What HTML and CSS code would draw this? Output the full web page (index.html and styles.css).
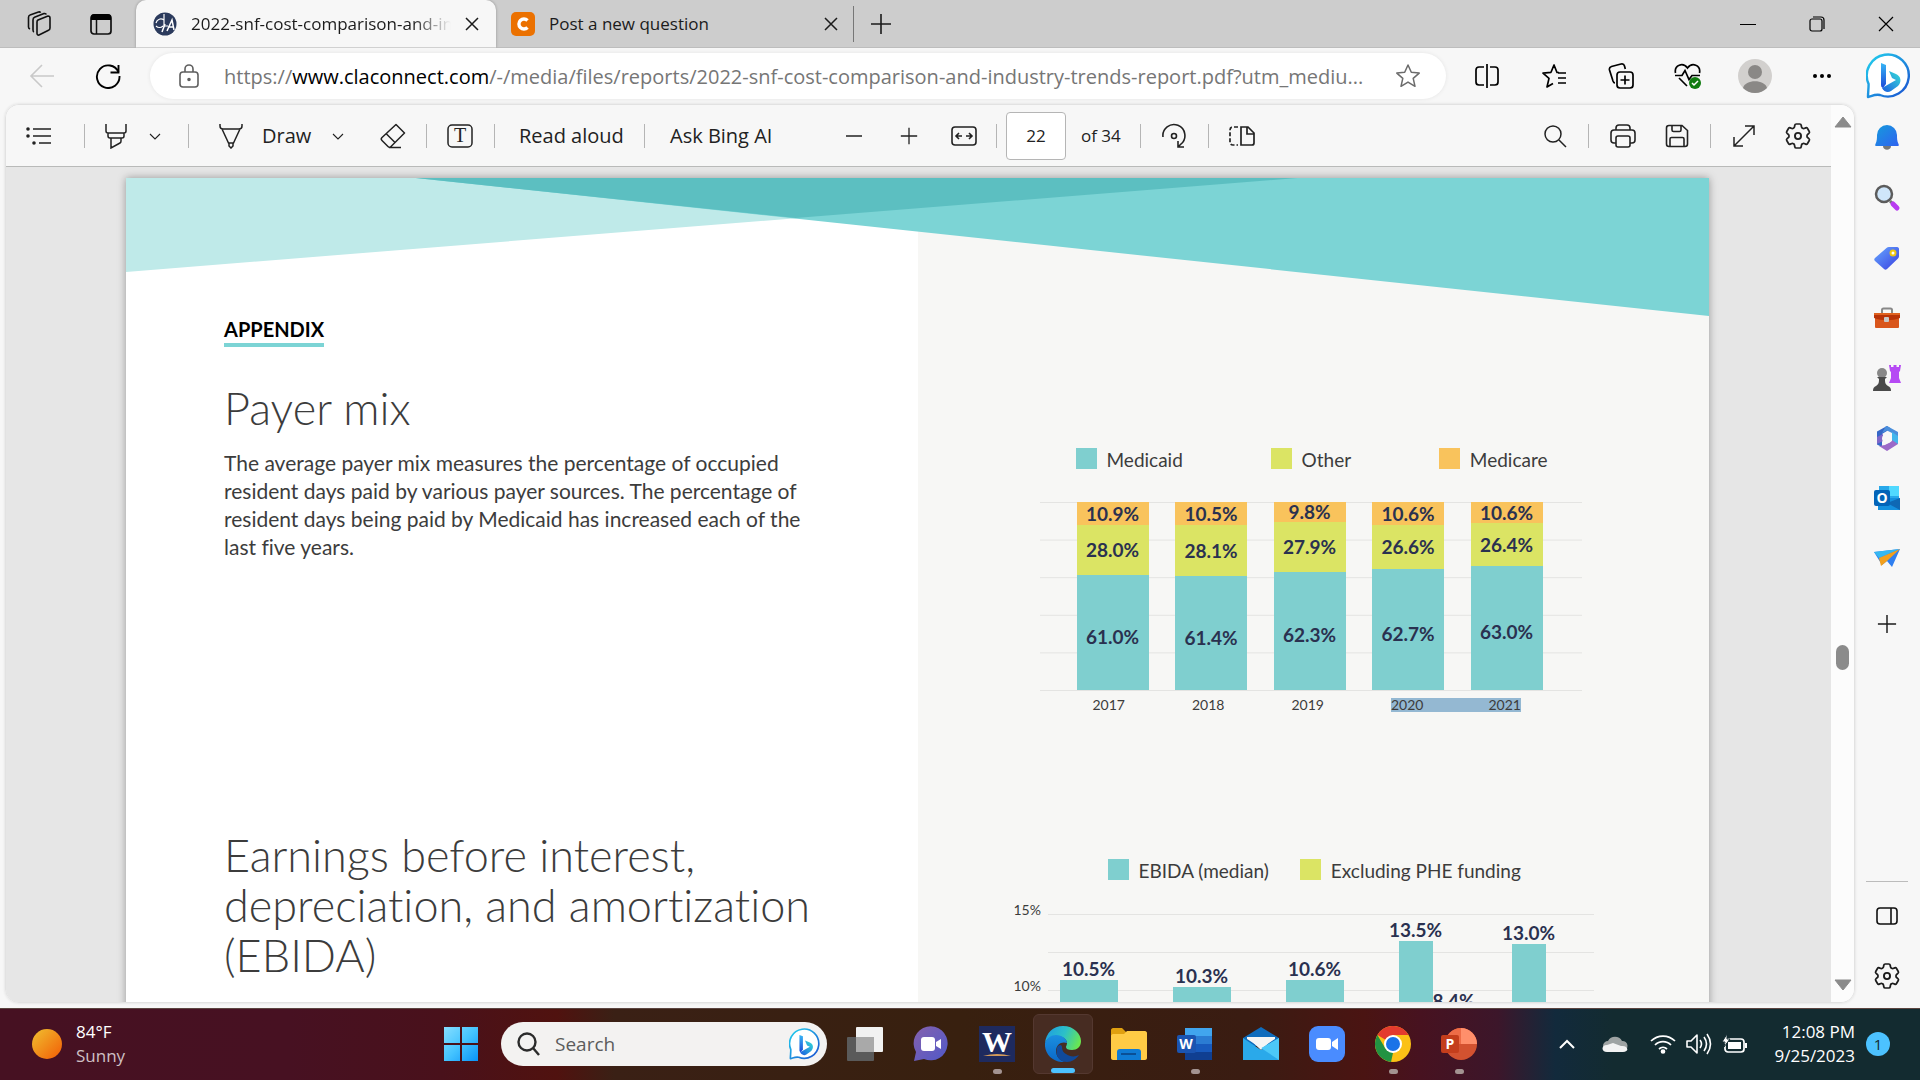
FILE: index.html
```html
<!DOCTYPE html>
<html lang="en">
<head>
    <meta charset="UTF-8">
    <meta name="viewport" content="width=device-width, initial-scale=1.0">
    <title>2022-snf-cost-comparison-and-industry-trends-report.pdf</title>
    <link rel="stylesheet" href="styles.css">
</head>
<body>
    <!-- shared icons -->
    <svg class="defs" aria-hidden="true">
        <defs>
            <linearGradient id="bing-ring" x1="0" y1="0" x2="1" y2="1">
                <stop offset="0" stop-color="#22d3ee"/>
                <stop offset="1" stop-color="#1a4fd0"/>
            </linearGradient>
            <linearGradient id="bing-b" x1="0" y1="0" x2="0" y2="1">
                <stop offset="0" stop-color="#37b6f5"/>
                <stop offset="1" stop-color="#1b48d8"/>
            </linearGradient>
            <linearGradient id="bing-tail" x1="0" y1="1" x2="1" y2="0">
                <stop offset="0" stop-color="#1b5be0"/>
                <stop offset="1" stop-color="#35e0d8"/>
            </linearGradient>
        </defs>
        <symbol id="gear" viewBox="0 0 24 24">
            <path fill="none" stroke="currentColor" stroke-width="1.3" d="M9.594 3.94c.09-.542.56-.94 1.11-.94h2.593c.55 0 1.02.398 1.11.94l.213 1.281c.063.374.313.686.645.87.074.04.147.083.22.127.325.196.72.257 1.075.124l1.217-.456a1.125 1.125 0 0 1 1.37.49l1.296 2.247a1.125 1.125 0 0 1-.26 1.431l-1.003.827c-.293.241-.438.613-.43.992a7.723 7.723 0 0 1 0 .255c-.008.378.137.75.43.991l1.004.827c.424.35.534.955.26 1.43l-1.298 2.247a1.125 1.125 0 0 1-1.369.491l-1.217-.456c-.355-.133-.75-.072-1.076.124a6.47 6.47 0 0 1-.22.128c-.331.183-.581.495-.644.869l-.213 1.281c-.09.543-.56.94-1.11.94h-2.594c-.55 0-1.019-.398-1.11-.94l-.213-1.281c-.062-.374-.312-.686-.644-.87a6.52 6.52 0 0 1-.22-.127c-.325-.196-.72-.257-1.076-.124l-1.217.456a1.125 1.125 0 0 1-1.369-.49l-1.297-2.247a1.125 1.125 0 0 1 .26-1.431l1.004-.827c.292-.24.437-.613.43-.991a6.932 6.932 0 0 1 0-.255c.007-.38-.138-.751-.43-.992l-1.004-.827a1.125 1.125 0 0 1-.26-1.43l1.297-2.247a1.125 1.125 0 0 1 1.37-.491l1.216.456c.356.133.751.072 1.076-.124.072-.044.146-.086.22-.128.332-.183.582-.495.644-.869l.214-1.28Z"/>
            <circle cx="12" cy="12" r="2.3" fill="none" stroke="currentColor" stroke-width="1.4"/>
        </symbol>
        <symbol id="bing" viewBox="0 0 46 46">
            <path d="M2 44c0-5 .6-8 .6-13A21 21 0 1 1 14 42c-5-1-8 1-12 2z" fill="#fff" stroke="url(#bing-ring)" stroke-width="2.4" stroke-linejoin="round"/>
            <path d="M15 10l5 2v19l-3 4c-2-1-2-2-2-4z" fill="url(#bing-b)"/>
            <path d="M23 18l7 3c5 2 6 8 2 12l-7 5c-3 2-7 1-9-3l14-8-4-2z" fill="url(#bing-tail)"/>
        </symbol>
        <symbol id="chevron" viewBox="0 0 12 12">
            <path d="M1 4l5 5 5-5" fill="none" stroke="currentColor" stroke-width="1.1"/>
        </symbol>
        <symbol id="close" viewBox="0 0 14 14">
            <path d="M1 1l12 12M13 1L1 13" fill="none" stroke="currentColor" stroke-width="1.5"/>
        </symbol>
        <symbol id="plus" viewBox="0 0 22 22">
            <path d="M11 1v20M1 11h20" fill="none" stroke="currentColor" stroke-width="1.6"/>
        </symbol>
    </svg>

    <header class="tab-bar">
        <button class="tab-tool" aria-label="Workspaces">
            <svg width="26" height="26" viewBox="0 0 26 26" fill="none" stroke="#111" stroke-width="1.6" stroke-linejoin="round"><path d="M12 9l10-4c1 0 2 .5 2 2v10c0 1-.5 2-1.500 2.300L13 24c-1 .3-2-.4-2-1.500V11c0-1 .3-1.600 1-2z"/><path d="M8 21c-1-.3-1-1-1-2V9c0-1.500.5-2.300 1.500-2.700L18 2.600c1-.2 2 0 2.300 1"/><path d="M4 18c-1-.4-1.500-1-1.500-2V6.500C2.500 5 3 4.300 4 4l8.500-3c1-.2 1.700 0 2 .7"/></svg>
        </button>
        <button class="tab-tool" aria-label="Tab actions">
            <svg width="24" height="24" viewBox="0 0 24 24"><rect x="2" y="3" width="20" height="19" rx="3" fill="none" stroke="#111" stroke-width="1.700"/><path d="M2 8V5c0-2 1-3 3-3h14c2 0 3 1 3 3v3z" fill="#000"/><path d="M7.500 8v14" stroke="#111" stroke-width="1.500"/></svg>
        </button>
        <div class="tab active">
            <svg width="24" height="24" viewBox="0 0 24 24"><circle cx="12" cy="12" r="11.500" fill="#2b3a5c"/><path d="M11 2v12h4M3 11c1-4 5-5 8-3M3 14c2 2 5 2 7 0" fill="none" stroke="#fff" stroke-width="1.200"/><path d="M9 20l3-8M14 19l5-11 2 10M15 15h6" fill="none" stroke="#fff" stroke-width="1.500"/></svg>
            <button class="tab-title fade">2022-snf-cost-comparison-and-industry</button>
            <button class="tab-close" aria-label="Close tab"><svg width="14" height="14"><use href="#close"/></svg></button>
        </div>
        <div class="tab">
            <svg width="24" height="24" viewBox="0 0 24 24"><rect width="24" height="24" rx="5" fill="#eb7100"/><path d="M16.500 8.500a5 5 0 1 0 0 7" fill="none" stroke="#fff" stroke-width="3.400"/></svg>
            <button class="tab-title">Post a new question</button>
            <button class="tab-close" aria-label="Close tab"><svg width="14" height="14"><use href="#close"/></svg></button>
        </div>
        <button class="new-tab" aria-label="New tab"><svg width="22" height="22"><use href="#plus"/></svg></button>
        <div class="window-controls">
            <button aria-label="Minimize"><svg width="16" height="16"><path d="M0 8.500h16" stroke="#000"/></svg></button>
            <button aria-label="Restore"><svg width="16" height="16" viewBox="0 0 16 16" fill="none" stroke="#000" stroke-width="1.200"><rect x="1" y="3" width="12" height="12" rx="2"/><path d="M4 1h8c2 0 3 1 3 3v9"/></svg></button>
            <button aria-label="Close"><svg width="16" height="16" viewBox="0 0 16 16"><path d="M1 1l14 14M15 1L1 15" stroke="#000" stroke-width="1.200"/></svg></button>
        </div>
    </header>

    <nav class="address-row">
        <button class="nav-btn" aria-label="Back"><svg width="26" height="26" viewBox="0 0 26 26" fill="none" stroke="#c9c9c9" stroke-width="1.600"><path d="M25 13H2M13 2L2 13l11 11"/></svg></button>
        <button class="nav-btn" aria-label="Refresh"><svg width="26" height="26" viewBox="0 0 26 26" fill="none" stroke="#000" stroke-width="1.900"><path d="M23.500 9A11.300 11.300 0 1 0 24.500 13"/><path d="M23.500 2v7.500h-8"/></svg></button>
        <div class="address">
            <svg width="22" height="26" viewBox="0 0 22 26" fill="none" stroke="#5f5f5f" stroke-width="1.600"><rect x="2" y="9" width="18" height="15" rx="3"/><path d="M7 9V6a4 4 0 0 1 8 0v3"/><circle cx="11" cy="16.500" r="1" fill="#5f5f5f"/></svg>
            <div class="url" role="textbox" contenteditable="true" spellcheck="false" aria-label="Address bar">https://<b>www.claconnect.com</b>/-/media/files/reports/2022-snf-cost-comparison-and-industry-trends-report.pdf?utm_mediu...</div>
            <button class="icon-btn" aria-label="Add to favorites"><svg width="26" height="26" viewBox="0 0 26 26" fill="none" stroke="#6b6b6b" stroke-width="1.500" stroke-linejoin="round"><path d="M13 2l3.300 7.300 7.900.8-6 5.300 1.800 7.900-7-4.200-7 4.200 1.800-7.900-6-5.300 7.900-.8z"/></svg></button>
        </div>
        <div class="browser-actions">
            <button aria-label="Split screen"><svg width="26" height="26" viewBox="0 0 26 26" fill="none" stroke="#000" stroke-width="1.700"><path d="M10 4H5C3 4 2 5 2 7v12c0 2 1 3 3 3h5M16 4h5c2 0 3 1 3 3v12c0 2-1 3-3 3h-5M13 1v24"/></svg></button>
            <button aria-label="Favorites"><svg width="26" height="26" viewBox="0 0 26 26" fill="none" stroke="#000" stroke-width="1.700" stroke-linejoin="round"><path d="M18 9.500h-2L13 2 10 9.300l-8 .8 6 5.300-2 8.600 6-3.500M17 10h8M17 15h8M17 20h8"/></svg></button>
            <button aria-label="Collections"><svg width="26" height="26" viewBox="0 0 26 26" fill="none" stroke="#000" stroke-width="1.700"><rect x="9" y="9" width="16" height="16" rx="3"/><path d="M17 12.500v9M12.500 17h9M5 18L1.500 7C1 5 2 4 3.500 3.500L13 1c2-.4 3 0 3.500 2l.8 3M5 18c.5 1.500 1.500 2 2 2"/></svg></button>
            <button aria-label="Browser essentials"><svg width="28" height="28" viewBox="0 0 28 28" fill="none" stroke="#000" stroke-width="1.700"><path d="M1.500 11C0 3 9 0 13.500 6 18 0 27 3 25.500 11M5 16l8 8M1 13.500h7l3-5 4 9 3-4h8"/><circle cx="21" cy="21" r="6" fill="#107c10" stroke="none"/><path d="M18 21l2 2 4-4" stroke="#fff" stroke-width="1.500"/></svg></button>
            <button aria-label="Profile"><svg width="34" height="34" viewBox="0 0 34 34"><circle cx="17" cy="17" r="17" fill="#d2d0ce"/><circle cx="17" cy="13" r="7" fill="#8a8886"/><path d="M5 29c2-9 22-9 24 0a17 17 0 0 1-24 0z" fill="#8a8886"/></svg></button>
            <button aria-label="Settings and more"><svg width="20" height="6"><circle cx="3" cy="3" r="2"/><circle cx="10" cy="3" r="2"/><circle cx="17" cy="3" r="2"/></svg></button>
            <button aria-label="Bing chat"><svg width="46" height="46"><use href="#bing"/></svg></button>
        </div>
    </nav>

    <div class="workspace">
        <section class="frame">
            <div class="viewer">
                <div class="pdf-toolbar">
                    <div class="group contents">
                        <button class="icon-btn" aria-label="Contents"><svg width="26" height="20" viewBox="0 0 26 20" stroke="#222" stroke-width="1.600"><path d="M7 3h18M7 10h18M13 17h12"/><circle cx="2" cy="3" r="1"/><circle cx="2" cy="10" r="1"/><circle cx="8" cy="17" r="1"/></svg></button>
                    </div>
                    <div class="group highlight">
                        <button class="icon-btn" aria-label="Highlight"><svg width="24" height="26" viewBox="0 0 24 26" fill="none" stroke="#222" stroke-width="1.500"><path d="M2 1v7c0 1 .5 2 2 2h16c1.500 0 2-1 2-2V1M4 10v3c0 1 .5 2 2 2h12c1.500 0 2-1 2-2v-3M7 15v10l9-5c1-.5 1-1 1-2v-3"/></svg></button>
                        <button class="small-btn" aria-label="Highlight colors"><svg width="12" height="12"><use href="#chevron"/></svg></button>
                    </div>
                    <div class="group draw">
                        <button class="icon-btn" aria-label="Pen"><svg width="24" height="26" viewBox="0 0 24 26" fill="none" stroke="#222" stroke-width="1.500"><path d="M1 1v2c0 2 1 3 3 3h16c2 0 3-1 3-3V1M3 6l6.500 14h5L21 6M10 20v3l2 2 2-2v-3"/></svg></button>
                        <button class="text-btn">Draw</button>
                        <button class="small-btn" aria-label="Pen options"><svg width="12" height="12"><use href="#chevron"/></svg></button>
                        <button class="icon-btn push" aria-label="Erase"><svg width="26" height="26" viewBox="0 0 26 26" fill="none" stroke="#222" stroke-width="1.500" stroke-linejoin="round"><path d="M16 1.500L24.500 10 11 23.500c-1 1-2 1-3 0L2 17.500c-1-1-1-2 0-3zM6 10.500l9 9M9 24.500h12"/></svg></button>
                    </div>
                    <div class="group text">
                        <button class="icon-btn" aria-label="Add text"><svg width="26" height="24" viewBox="0 0 26 24"><rect x="1" y="1" width="24" height="22" rx="4" fill="none" stroke="#222" stroke-width="1.500"/><text x="13" y="18" text-anchor="middle" class="serif-t">T</text></svg></button>
                    </div>
                    <div class="group read"><button class="text-btn">Read aloud</button></div>
                    <div class="group ask">
                        <button class="text-btn">Ask Bing AI</button>
                        <button class="icon-btn push" aria-label="Zoom out"><svg width="16" height="16"><path d="M0 8h16" stroke="#222" stroke-width="1.500"/></svg></button>
                        <button class="icon-btn" aria-label="Zoom in"><svg width="18" height="18"><use href="#plus"/></svg></button>
                        <button class="icon-btn" aria-label="Fit to width"><svg width="26" height="20" viewBox="0 0 26 20" fill="none" stroke="#222" stroke-width="1.600"><rect x="1" y="1" width="24" height="18" rx="3"/><path d="M11 10H5M15 10h6M8 7l-3 3 3 3M18 7l3 3-3 3"/></svg></button>
                    </div>
                    <div class="group pages">
                        <input class="page-number" type="text" value="22" aria-label="Page number">
                        <span>of 34</span>
                    </div>
                    <div class="group rotate">
                        <button class="icon-btn" aria-label="Rotate"><svg width="26" height="26" viewBox="0 0 26 26" fill="none" stroke="#222" stroke-width="1.600"><path d="M2 14A11 11 0 1 1 20 21l-3 3M17 18v6h6"/><circle cx="13" cy="13" r="2.500"/></svg></button>
                    </div>
                    <div class="group layout">
                        <button class="icon-btn" aria-label="Page view"><svg width="26" height="20" viewBox="0 0 26 20" fill="none" stroke="#222" stroke-width="1.700"><path d="M12 1h7l6 6v10c0 1.500-.5 2-2 2H12zM18 1v7h7"/><path d="M9 1H4C2 1 1 2 1 4v12c0 2 1 3 3 3h5" stroke-dasharray="4 2"/></svg></button>
                    </div>
                    <div class="group find">
                        <button class="icon-btn" aria-label="Find"><svg width="24" height="24" viewBox="0 0 24 24" fill="none" stroke="#222" stroke-width="1.500"><circle cx="10" cy="10" r="8"/><path d="M16 16l7 7"/></svg></button>
                    </div>
                    <div class="group print">
                        <button class="icon-btn" aria-label="Print"><svg width="26" height="24" viewBox="0 0 26 24" fill="none" stroke="#222" stroke-width="1.600"><path d="M6 19H4c-2 0-3-1-3-3V9c0-2 1-3 3-3h18c2 0 3 1 3 3v7c0 2-1 3-3 3h-2M6 6V4c0-2 1-3 3-3h8c2 0 3 1 3 3v2"/><rect x="6" y="12" width="14" height="11" rx="2"/></svg></button>
                        <button class="icon-btn" aria-label="Save"><svg width="24" height="24" viewBox="0 0 24 24" fill="none" stroke="#222" stroke-width="1.600"><path d="M4 1.500h13l5.500 5V20c0 1.500-1 2.500-2.500 2.500H4c-1.500 0-2.500-1-2.500-2.500V4c0-1.500 1-2.500 2.500-2.500zM7 2v4c0 1 .5 1.500 1.500 1.500h6c1 0 1.500-.5 1.500-1.500V2M5 22v-7c0-1 .5-1.500 1.500-1.500h11c1 0 1.500.5 1.500 1.500v7"/></svg></button>
                    </div>
                    <div class="group expand">
                        <button class="icon-btn" aria-label="Full screen"><svg width="24" height="24" viewBox="0 0 24 24" fill="none" stroke="#222" stroke-width="1.500"><path d="M2 22L22 2M13 2h9v9M2 13v9h9"/></svg></button>
                        <button class="icon-btn" aria-label="PDF settings"><svg width="32" height="32"><use href="#gear"/></svg></button>
                    </div>
                </div>

                <main class="document">
                    <article class="page">
                        <svg class="page-banner" viewBox="0 0 1584 138" preserveAspectRatio="none">
                            <path d="M0 0h1172L0 94z" fill="#bfeae9"/>
                            <path d="M290 0h1294v138z" fill="#7cd4d5"/>
                            <path d="M290 0h882L670 40z" fill="#5cbfc1"/>
                        </svg>
                        <div class="column copy">
                            <p class="eyebrow">APPENDIX</p>
                            <h2>Payer mix</h2>
                            <p class="body-text">The average payer mix measures the percentage of occupied<br>resident days paid by various payer sources. The percentage of<br>resident days being paid by Medicaid has increased each of the<br>last five years.</p>
                            <h2 class="second">Earnings before interest,<br>depreciation, and amortization<br>(EBIDA)</h2>
                        </div>
                        <div class="column charts">
                            <div class="legend payer-legend">
                                <span><i class="teal"></i>Medicaid</span>
                                <span><i class="lime"></i>Other</span>
                                <span><i class="gold"></i>Medicare</span>
                            </div>
                            <div class="payer-plot">
                                <div class="stack">
                                    <div class="gold" style="height:12%">10.9%</div>
                                    <div class="lime" style="height:27%">28.0%</div>
                                    <div class="teal" style="height:61%">61.0%</div>
                                </div>
                                <div class="stack">
                                    <div class="gold" style="height:12%">10.5%</div>
                                    <div class="lime" style="height:27.4%">28.1%</div>
                                    <div class="teal" style="height:60.6%">61.4%</div>
                                </div>
                                <div class="stack">
                                    <div class="gold" style="height:10.6%">9.8%</div>
                                    <div class="lime" style="height:26.4%">27.9%</div>
                                    <div class="teal" style="height:63%">62.3%</div>
                                </div>
                                <div class="stack">
                                    <div class="gold" style="height:12%">10.6%</div>
                                    <div class="lime" style="height:23.6%">26.6%</div>
                                    <div class="teal" style="height:64.4%">62.7%</div>
                                </div>
                                <div class="stack">
                                    <div class="gold" style="height:11.4%">10.6%</div>
                                    <div class="lime" style="height:22.6%">26.4%</div>
                                    <div class="teal" style="height:66%">63.0%</div>
                                </div>
                            </div>
                            <div class="years">
                                <span>2017</span>
                                <span>2018</span>
                                <span>2019</span>
                                <mark><span>2020</span><span>2021</span></mark>
                            </div>

                            <div class="legend ebida-legend">
                                <span><i class="teal"></i>EBIDA (median)</span>
                                <span><i class="lime"></i>Excluding PHE funding</span>
                            </div>
                            <div class="ebida">
                                <div class="axis"><span>15%</span><span>10%</span><span>5%</span></div>
                                <div class="ebida-plot">
                                    <div class="bars"><div class="bar wide" style="height:71%"><b>10.5%</b></div></div>
                                    <div class="bars"><div class="bar wide" style="height:68%"><b>10.3%</b></div></div>
                                    <div class="bars"><div class="bar wide" style="height:71%"><b>10.6%</b></div></div>
                                    <div class="bars">
                                        <div class="bar" style="height:88%"><b>13.5%</b></div>
                                        <div class="bar alt" style="height:57%"><b>8.4%</b></div>
                                    </div>
                                    <div class="bars"><div class="bar" style="height:87%"><b>13.0%</b></div></div>
                                </div>
                            </div>
                        </div>
                    </article>
                </main>
            </div>
            <div class="scrollbar">
                <svg width="18" height="12"><path d="M9 1l8 10H1z" fill="#8b8b8b" stroke="#8b8b8b" stroke-linejoin="round"/></svg>
                <span class="thumb"></span>
                <svg width="18" height="12"><path d="M9 11L1 1h16z" fill="#8b8b8b" stroke="#8b8b8b" stroke-linejoin="round"/></svg>
            </div>
        </section>

        <aside class="sidebar">
            <button aria-label="Notifications"><svg width="26" height="28" viewBox="0 0 26 28"><defs><linearGradient id="bell" x2="1" y2="1"><stop stop-color="#159bdc"/><stop offset="1" stop-color="#2f62f0"/></linearGradient></defs><path d="M9 22h8c0 5-8 5-8 0z" fill="#777"/><path d="M2 22c-1 0-1-1-.5-2C3 17 3 14 3 11a10 10 0 0 1 20 0c0 3 0 6 1.500 9 .5 1 .5 2-.5 2z" fill="url(#bell)"/></svg></button>
            <button aria-label="Search"><svg width="28" height="28" viewBox="0 0 28 28"><path d="M17 17l3 3" stroke="#777" stroke-width="3"/><path d="M20 20l4 4" stroke="#b83cf0" stroke-width="5" stroke-linecap="round"/><circle cx="11" cy="10" r="8" fill="#cfe6fa" stroke="#5c5c5c" stroke-width="2.500"/></svg></button>
            <button aria-label="Shopping"><svg width="28" height="28" viewBox="0 0 28 28"><defs><linearGradient id="tag" x2="1" y2="1"><stop stop-color="#66a8ff"/><stop offset="1" stop-color="#3a3fe0"/></linearGradient></defs><path d="M16 3h8c1.500 0 2 1 2 2v7c0 1-.5 2-1 2.500L14 25c-1 1-2 1-3 0l-9-8c-1-1-1-2 0-3L13.500 4c.7-.6 1.500-1 2.500-1z" fill="url(#tag)"/><circle cx="20" cy="9" r="2.500" fill="#fff" stroke="#f2c811" stroke-width="2"/></svg></button>
            <button aria-label="Tools"><svg width="28" height="28" viewBox="0 0 28 28"><path d="M9 9V6c0-1 .6-1.500 1.500-1.500h7c1 0 1.500.5 1.500 1.500v3" fill="none" stroke="#888" stroke-width="2"/><rect x="2" y="13" width="24" height="11" rx="1" fill="#d9561c"/><path d="M1 9h26v5c-8 3-18 3-26 0z" fill="#b93408"/><path d="M1 9h26v2H1z" fill="#e0621f"/><rect x="11" y="13" width="5" height="5" rx="1" fill="#c8c8c8"/></svg></button>
            <button aria-label="Games"><svg width="28" height="28" viewBox="0 0 28 28"><path d="M16 1h2v2h2.500V1h3v2H26V1h2l-1 6-1 1v6l2 5H16l2-5V8l-1-1z" fill="#b64af4"/><circle cx="9" cy="9" r="5" fill="#888"/><path d="M4 13h10l-2 2c0 3 0 5 3 7 2 1 3 2 3 5H0c0-3 1-4 3-5 3-2 3-4 3-7z" fill="#4a4a4a"/></svg></button>
            <button aria-label="Microsoft 365"><svg width="28" height="28" viewBox="0 0 28 28"><path d="M14 2L4 7.500v13L9 23V10l9-5.500z" fill="#3567c7"/><path d="M14 2l11 6v9l-6-4V9l-5-2.500L9 9l4-7z" fill="#4a8fdc"/><path d="M25 12v8l-11 7-8-5 6-1 7-4V9z" fill="#9b69c8"/><path d="M19 8l6 4v8l-6-4z" fill="#42b6ec"/><path d="M4 20l6-3v-7L4 13z" fill="#7e67c8"/><circle cx="14" cy="14.500" r="5" fill="#f7f7f7"/></svg></button>
            <button aria-label="Outlook"><svg width="28" height="28" viewBox="0 0 28 28"><path d="M6 2h20v12H6z" fill="#28a8ea"/><path d="M16 2h10v10H16z" fill="#50d9ff"/><path d="M5 14h22v12H5z" fill="#1490df"/><path d="M27 14v12L14 19z" fill="#0f68b4"/><rect x="1" y="6" width="16" height="16" rx="2" fill="#0364b8"/><text x="9" y="19" text-anchor="middle" class="app-letter">O</text></svg></button>
            <button aria-label="Drop"><svg width="28" height="28" viewBox="0 0 28 28"><path d="M1 8l26-3-8 18-5-6-5 4z" fill="#2f7ff0"/><path d="M1 8l26-3L6 14z" fill="#35b8f0"/><path d="M6 14l21-9-13 12-6 5z" fill="#f3a01c"/></svg></button>
            <button class="add" aria-label="Customize"><svg width="20" height="20"><use href="#plus"/></svg></button>
            <div class="sidebar-foot">
                <button aria-label="Hide sidebar"><svg width="22" height="18" viewBox="0 0 22 18" fill="none" stroke="#111" stroke-width="1.600"><rect x="1" y="1" width="20" height="16" rx="3"/><path d="M15 1v16"/></svg></button>
                <button aria-label="Settings"><svg width="32" height="32"><use href="#gear"/></svg></button>
            </div>
        </aside>
    </div>

    <footer class="taskbar">
        <button class="weather">
            <svg width="30" height="30"><defs><linearGradient id="sun" x2="1" y2="1"><stop stop-color="#f0c030"/><stop offset="1" stop-color="#f25c05"/></linearGradient></defs><circle cx="15" cy="15" r="15" fill="url(#sun)"/></svg>
            <span>84°F<small>Sunny</small></span>
        </button>
        <div class="apps">
            <button class="app" aria-label="Start"><svg width="36" height="36" viewBox="0 0 36 36"><defs><linearGradient id="win" gradientUnits="userSpaceOnUse" x1="0" y1="0" x2="36" y2="36"><stop stop-color="#8ae0ff"/><stop offset=".5" stop-color="#45c4ff"/><stop offset="1" stop-color="#0590f8"/></linearGradient></defs><path d="M1 1h16v16H1zM19 1h16v16H19zM1 19h16v16H1zM19 19h16v16H19z" fill="url(#win)"/></svg></button>
            <label class="search">
                <svg width="24" height="24" viewBox="0 0 24 24" fill="none" stroke="#2b2b2b" stroke-width="2.400"><circle cx="11" cy="10" r="8.500"/><path d="M17 16l6 7"/></svg>
                <input type="text" placeholder="Search" aria-label="Search">
                <svg width="32" height="32"><use href="#bing"/></svg>
            </label>
            <button class="app" aria-label="Task view"><svg width="36" height="36" viewBox="0 0 36 36"><rect x="9" y="1" width="27" height="25" rx="1" fill="#f1f1f1"/><rect x="0" y="11" width="27" height="24" rx="1" fill="#5a5a5a"/><path d="M9 11h18v15H9z" fill="#a9a9a9"/></svg></button>
            <button class="app" aria-label="Chat"><svg width="36" height="36" viewBox="0 0 36 36"><defs><linearGradient id="chat" x2="1" y2="1"><stop stop-color="#8561ad"/><stop offset="1" stop-color="#5059c9"/></linearGradient></defs><path d="M1 35l2-9A17 17 0 1 1 11 33z" fill="url(#chat)"/><rect x="8" y="11" width="14" height="14" rx="3" fill="#fff"/><path d="M23 16l5-3v10l-5-3z" fill="#fff"/></svg></button>
            <button class="app running" aria-label="W"><svg width="36" height="36" viewBox="0 0 36 36"><path fill="#1e2a5e" d="M0 0h36v36H0z"/><text x="18" y="26" text-anchor="middle" class="serif-w">W</text><path d="M4 30q14-4 28 0z" fill="#d29a5a"/></svg></button>
            <button class="app current" aria-label="Edge"><svg width="36" height="36" viewBox="0 0 36 36"><defs><linearGradient id="edge-top" x1="0" y1=".3" x2="1" y2=".6"><stop stop-color="#1f9fe0"/><stop offset=".5" stop-color="#2cc0c8"/><stop offset="1" stop-color="#6be84e"/></linearGradient><linearGradient id="edge-left" x1="0" y1="0" x2="0" y2="1"><stop stop-color="#1b8fe0"/><stop offset="1" stop-color="#0a68c8"/></linearGradient></defs><path d="M0 17C1 7 8 0 18 0c11 0 18 8 18 15 0 6-4 9-9 9-4 0-6-1-6-3 0-1 1-2 1-4 0-4-5-7-10-7-6 0-10 3-12 7z" fill="url(#edge-top)"/><path d="M0 17c2-5 6-8 11-8 6 0 11 4 11 8-5-2-11 1-11 8 0 5 4 10 9 11C8 37-1 28 0 17z" fill="url(#edge-left)"/><path d="M13 20c-3 4-2 16 9 16 5 0 9-3 12-7-4 2-9 2-13-1-2-1-4-3-4-7 0-2-2-3-4-1z" fill="#10499a"/></svg></button>
            <button class="app" aria-label="File Explorer"><svg width="36" height="36" viewBox="0 0 36 36"><path d="M0 4c0-1 1-2 2-2h9l4 4h8v8H0z" fill="#e0a010"/><path d="M0 10c0-1 1-2 2-2h11l3-3h18c1 0 2 1 2 2v25c0 1-1 2-2 2H2c-1 0-2-1-2-2z" fill="#ffcb45"/><path d="M6 34v-8c0-2 1-3 3-3h18c2 0 3 1 3 3v8z" fill="#0f7bd4"/><path d="M10 28h15" stroke="#0a4f95" stroke-width="2"/></svg></button>
            <button class="app running" aria-label="Word"><svg width="36" height="36" viewBox="0 0 36 36"><path d="M8 2h27v8H8z" fill="#41a5ee"/><path d="M8 10h27v8H8z" fill="#2b7cd3"/><path d="M8 18h27v8H8z" fill="#185abd"/><path d="M8 26h27v8H8z" fill="#103f91"/><rect x="0" y="9" width="19" height="18" rx="2" fill="#1b54b0"/><text x="9" y="23" text-anchor="middle" class="app-letter">W</text></svg></button>
            <button class="app" aria-label="Mail"><svg width="36" height="36" viewBox="0 0 36 36"><path d="M0 12L18 1l18 11v8H0z" fill="#0f6cbd"/><path d="M4 11h28L18 24z" fill="#f5f5f5"/><path d="M0 12l18 12 18-12v22H0z" fill="#2aa9ea"/><path d="M36 12v22L18 22z" fill="#4cc8f8"/><path d="M4 11h28v2L18 22 4 13z" fill="#f5f5f5"/></svg></button>
            <button class="app" aria-label="Zoom"><svg width="36" height="36" viewBox="0 0 36 36"><rect width="36" height="36" rx="9" fill="#4a8cff"/><rect x="7" y="12" width="15" height="12" rx="3" fill="#fff"/><path d="M23 16l6-4v12l-6-4z" fill="#fff"/></svg></button>
            <button class="app running" aria-label="Chrome"><svg width="36" height="36" viewBox="0 0 36 36"><circle cx="18" cy="18" r="18" fill="#fbc116"/><path d="M2.400 9A18 18 0 0 1 33.600 9H18l-8 4.500z" fill="#e33b2e"/><path d="M2.400 9l8 13.500L18 27l-2 8.900A18 18 0 0 1 2.400 9z" fill="#229342"/><circle cx="18" cy="18" r="9" fill="#fff"/><circle cx="18" cy="18" r="7" fill="#1a73e8"/></svg></button>
            <button class="app running" aria-label="PowerPoint"><svg width="36" height="36" viewBox="0 0 36 36"><circle cx="20" cy="18" r="16" fill="#d35230"/><path d="M20 2a16 16 0 0 1 16 16H20z" fill="#ff8f6b"/><path d="M20 2v16H4A16 16 0 0 1 20 2z" fill="#ed6c47"/><rect x="0" y="9" width="18" height="18" rx="2" fill="#c43e1c"/><text x="9" y="23" text-anchor="middle" class="app-letter">P</text></svg></button>
        </div>
        <div class="tray">
            <button aria-label="Show hidden icons"><svg width="16" height="10" fill="none" stroke="#fff" stroke-width="2"><path d="M1 9l7-7 7 7"/></svg></button>
            <button class="cloud" aria-label="OneDrive"><svg width="26" height="18" viewBox="0 0 26 18"><path d="M6 16a5 5 0 0 1 0-10 8 8 0 0 1 14 0 5 5 0 0 1 1 10z" fill="#9ea3a3"/><path d="M5 17c-6 0-6-7 0-7l6-2 8 3c7-1 9 6 2 6z" fill="#f2f2f2"/></svg></button>
            <button aria-label="Network"><svg width="26" height="20" viewBox="0 0 26 20" fill="none" stroke="#fff" stroke-width="1.700"><path d="M1 7a17 17 0 0 1 24 0M5 11a11 11 0 0 1 16 0M9 15a6 6 0 0 1 8 0"/><circle cx="13" cy="17.500" r="1.500" fill="#fff"/></svg></button>
            <button aria-label="Volume"><svg width="26" height="22" viewBox="0 0 26 22" fill="none" stroke="#fff" stroke-width="1.600" stroke-linejoin="round"><path d="M1 8h4l6-6v18l-6-6H1zM14 7q3 4 0 8M18 4q5 7 0 14M21 1q7 10 0 20"/></svg></button>
            <button aria-label="Battery"><svg width="26" height="20" viewBox="0 0 26 20"><rect x="3" y="5" width="19" height="13" rx="3" fill="none" stroke="#fff" stroke-width="1.700"/><rect x="6" y="8" width="13" height="7" fill="#fff"/><path d="M24 9v5" stroke="#fff" stroke-width="2"/><path d="M5 0L0 8h3l-1 5 6-8H5z" fill="#fff" stroke="#132b30"/></svg></button>
            <button class="clock">12:08 PM<br>9/25/2023</button>
            <span class="badge">1</span>
        </div>
    </footer>
</body>
</html>
```
FILE: styles.css
```css
* {
    box-sizing: border-box;
}
body {
    margin: 0;
    height: 100vh;
    display: flex;
    flex-direction: column;
    overflow: hidden;
    background-color: #f7f7f7;
    color: #1b1b1b;
    font-family: "Open Sans", "Noto Sans", sans-serif;
    font-size: 18px;
}
button {
    display: flex;
    align-items: center;
    justify-content: center;
    padding: 0;
    border: none;
    background: none;
    color: inherit;
    font: inherit;
    white-space: nowrap;
    cursor: pointer;
}
svg {
    display: block;
    flex: none;
}
.defs {
    position: absolute;
    width: 0;
    height: 0;
}

/* tab strip */
.tab-bar {
    display: flex;
    align-items: center;
    flex: none;
    height: 48px;
    padding-left: 8px;
    background-color: #cdcdcd;
    border-bottom: 1px solid #bdbdbd;
}
.tab-tool {
    width: 62px;
    height: 48px;
}
.tab {
    display: flex;
    align-items: center;
    gap: 14px;
    width: 357px;
    height: 48px;
    padding: 0 15px;
}
.tab.active {
    width: 360px;
    margin-left: 4px;
    padding: 0 17px;
    background-color: #f7f7f7;
    border-radius: 10px 10px 0 0;
    box-shadow: 0 0 3px rgba(0, 0, 0, 0.3);
    clip-path: inset(0 -4px 0 -4px);
}
.tab-title {
    flex: 1;
    min-width: 0;
    overflow: hidden;
    justify-content: flex-start;
    font-size: 17px;
}
.tab-title.fade {
    -webkit-mask-image: linear-gradient(to right, #000 85%, transparent);
    mask-image: linear-gradient(to right, #000 85%, transparent);
}
.new-tab {
    width: 54px;
    height: 36px;
    border-left: 1px solid #777;
}
.window-controls {
    display: flex;
    margin-left: auto;
}
.window-controls button {
    width: 69px;
    height: 48px;
}

/* address row */
.address-row {
    display: flex;
    align-items: center;
    flex: none;
    height: 56px;
    padding: 0 8px 0 9px;
}
.nav-btn {
    width: 66px;
    height: 46px;
}
.address {
    display: flex;
    align-items: center;
    flex: 1;
    min-width: 0;
    height: 46px;
    margin-left: 9px;
    padding: 0 22px 0 28px;
    background-color: #fff;
    border-radius: 23px;
    box-shadow: 0 0 4px rgba(0, 0, 0, 0.08);
}
.url {
    flex: 1;
    min-width: 0;
    margin-left: 24px;
    overflow: hidden;
    white-space: nowrap;
    color: #767676;
    font-size: 20px;
    outline: none;
}
.url b {
    color: #000;
    font-weight: 400;
}
.browser-actions {
    display: flex;
    gap: 20px;
    margin-left: 17px;
}
.browser-actions button {
    width: 47px;
    height: 46px;
}

/* document frame and sidebar */
.workspace {
    display: flex;
    flex: 1;
    min-height: 0;
    padding-left: 5px;
}
.frame {
    display: flex;
    flex: 1;
    min-width: 0;
    margin-bottom: 5px;
    overflow: hidden;
    border: 1px solid #e2e2e2;
    border-radius: 14px;
    box-shadow: 0 0 3px rgba(0, 0, 0, 0.12);
}
.viewer {
    display: flex;
    flex-direction: column;
    flex: 1;
    min-width: 0;
}
.scrollbar {
    display: flex;
    flex-direction: column;
    align-items: center;
    width: 23px;
    padding: 11px 0;
    background-color: #fcfcfc;
}
.scrollbar svg:last-child {
    margin-top: auto;
}
.thumb {
    width: 13px;
    height: 25px;
    margin-top: 517px;
    border-radius: 7px;
    background-color: #8b8b8b;
}

/* pdf toolbar */
.pdf-toolbar {
    display: flex;
    align-items: center;
    flex: none;
    height: 62px;
    background-color: #f7f7f7;
    border-bottom: 1px solid #b9bab9;
    color: #222;
}
.group {
    display: flex;
    align-items: center;
    height: 24px;
    border-left: 1px solid #b5b5b5;
}
.icon-btn {
    width: 32px;
    height: 32px;
}
.small-btn {
    width: 24px;
    height: 32px;
}
.text-btn {
    font-size: 20px;
}
.push {
    margin-left: auto;
}
.contents {
    width: 78px;
    padding-left: 17px;
    border: none;
}
.highlight {
    width: 104px;
    padding-left: 15px;
    gap: 11px;
}
.draw {
    width: 238px;
    padding: 0 17px 0 26px;
    gap: 15px;
}
.text {
    width: 68px;
    padding-left: 17px;
}
.read {
    width: 150px;
    padding-left: 24px;
}
.ask {
    width: 352px;
    padding: 0 16px 0 25px;
    gap: 23px;
}
.pages {
    width: 144px;
    padding-left: 9px;
    gap: 15px;
}
.page-number {
    width: 60px;
    height: 48px;
    padding: 0;
    border: 1px solid #b5b5b5;
    border-radius: 4px;
    background-color: #fff;
    color: #222;
    font: inherit;
    font-size: 17px;
    text-align: center;
}
.pages span {
    font-size: 17px;
}
.rotate {
    width: 68px;
    padding-left: 17px;
}
.layout {
    padding-left: 17px;
}
.find {
    margin-left: auto;
    padding-right: 17px;
    border: none;
}
.print {
    width: 122px;
    padding-left: 18px;
    gap: 22px;
}
.expand {
    padding: 0 17px;
    gap: 22px;
}
.serif-t {
    fill: #222;
    font-family: "Liberation Serif", serif;
    font-size: 20px;
}

/* document page */
.document {
    flex: 1;
    min-height: 0;
    overflow: hidden;
    padding: 11px 122px 0 120px;
    background-color: #e6e6e6;
}
.page {
    position: relative;
    display: grid;
    grid-template-columns: 1fr 1fr;
    height: 1224px;
    background-color: #fff;
    box-shadow: 0 0 8px rgba(0, 0, 0, 0.35);
    color: #3c3c3c;
    font-family: "Lato", sans-serif;
    font-variant-ligatures: none;
}
.page-banner {
    position: absolute;
    top: 0;
    left: 0;
    width: 100%;
    height: 138px;
}
.copy {
    padding: 139px 0 0 98px;
}
.eyebrow {
    width: fit-content;
    margin: 0 0 36px;
    padding-bottom: 2px;
    border-bottom: 4px solid #7cd4d5;
    color: #000;
    font-size: 20px;
    font-weight: 700;
    line-height: 24px;
}
h2 {
    margin: 0;
    font-size: 45px;
    font-weight: 300;
    line-height: 50px;
}
.body-text {
    margin: 16px 0 0;
    font-size: 21px;
    line-height: 28px;
}
.second {
    margin-top: 269px;
}
.charts {
    padding: 270px 0 0 122px;
    background-color: #f7f7f5;
}
.teal {
    background-color: #7fcfcf;
}
.lime {
    background-color: #dbe464;
}
.gold {
    background-color: #f9c35c;
}
.legend {
    display: flex;
    font-size: 19px;
    line-height: 24px;
}
.legend span {
    display: flex;
    gap: 10px;
}
.legend i {
    width: 21px;
    height: 21px;
}
.payer-legend {
    justify-content: space-between;
    width: 472px;
    margin-left: 36px;
}
.payer-plot {
    display: flex;
    justify-content: space-between;
    width: 542px;
    height: 189px;
    margin-top: 30px;
    padding: 0 39px 0 37px;
    background: linear-gradient(#e4e4e2 1px, transparent 1px) 0 0 / 100% 20%;
    border-bottom: 1px solid #e4e4e2;
}
.stack {
    width: 72px;
}
.stack div {
    display: flex;
    align-items: center;
    justify-content: center;
    color: #2a3150;
    font-size: 19px;
    font-weight: 700;
}
.stack .teal {
    padding-top: 8px;
}
.years {
    display: flex;
    gap: 67px;
    margin-top: 7px;
    padding-left: 53px;
    font-size: 14px;
    line-height: 14px;
}
.years mark {
    display: flex;
    justify-content: space-between;
    width: 130px;
    background-color: #94b8d2;
    color: inherit;
}
.ebida-legend {
    gap: 31px;
    margin: 147px 0 0 68px;
}
.ebida {
    display: flex;
    gap: 8px;
    margin: 31px 0 0 -26px;
}
.axis {
    display: flex;
    flex-direction: column;
    gap: 60px;
    width: 26px;
    margin-top: -12px;
    font-size: 14px;
    line-height: 16px;
    text-align: right;
}
.ebida-plot {
    display: grid;
    grid-template-columns: repeat(4, 113px) auto;
    width: 546px;
    height: 228px;
    padding-left: 12px;
    background: linear-gradient(#e4e4e2 1px, transparent 1px) 0 0 / 100% 38px;
}
.bars {
    display: flex;
    align-items: flex-end;
    gap: 4px;
}
.bar {
    display: flex;
    justify-content: center;
    width: 34px;
    background-color: #7fcfcf;
}
.bar.wide {
    width: 58px;
}
.bar.alt {
    background-color: #dbe464;
}
.bar b {
    height: 22px;
    margin-top: -22px;
    color: #2a3150;
    font-size: 19px;
    line-height: 22px;
}

/* sidebar */
.sidebar {
    display: flex;
    flex-direction: column;
    align-items: center;
    width: 65px;
    padding: 4px 2px 2px 0;
}
.sidebar button {
    width: 48px;
    height: 60px;
}
.sidebar .add {
    margin-top: 6px;
}
.sidebar-foot {
    margin-top: auto;
    padding-top: 4px;
    border-top: 1px solid #bcbcbc;
}
.sidebar-foot button {
    width: 42px;
}
.app-letter {
    fill: #fff;
    font-family: "Open Sans", sans-serif;
    font-size: 14px;
    font-weight: 700;
}

/* taskbar */
.taskbar {
    display: flex;
    flex: none;
    height: 72px;
    padding-bottom: 2px;
    border-top: 1px solid #5b4440;
    background: linear-gradient(to right, #461122 0%, #471122 15%, #49111b 23%, #50120f 29%, #3a2015 32%, #38200f 50%, #3a1c12 65%, #4a1412 71%, #471220 74%, #3c162a 78%, #122a3c 81%, #132b30 84%);
    color: #fff;
}
.weather {
    flex: 0 0 431px;
    gap: 14px;
    justify-content: flex-start;
    padding-left: 32px;
    font-size: 17px;
    line-height: 24px;
    text-align: left;
}
.weather small {
    display: block;
    color: #cfc0c4;
    font-size: 17px;
}
.apps {
    display: flex;
    align-items: center;
    gap: 6px;
}
.app {
    position: relative;
    width: 60px;
    height: 60px;
    border-radius: 6px;
}
.running::after, .current::after {
    content: "";
    position: absolute;
    bottom: 0;
    width: 9px;
    height: 5px;
    border-radius: 3px;
    background-color: #a39391;
}
.current {
    border: 1px solid #543830;
    background-color: #472c22;
}
.current::after {
    width: 24px;
    background-color: #4cc2ff;
}
.search {
    display: flex;
    align-items: center;
    width: 326px;
    height: 44px;
    margin: 0 2px 0 4px;
    padding: 0 6px 0 15px;
    border-radius: 22px;
    background-color: #f3f2f1;
}
.search input {
    flex: 1;
    min-width: 0;
    margin-left: 15px;
    padding: 0;
    border: none;
    background: none;
    font: inherit;
    font-size: 19px;
    outline: none;
}
.search input::placeholder {
    color: #5c5c5c;
}
.tray {
    display: flex;
    align-items: center;
    margin-left: auto;
    padding-right: 30px;
}
.tray button {
    width: 36px;
    height: 48px;
}
.tray button:nth-child(-n+2) {
    width: 48px;
}
.tray .cloud {
    margin-right: 6px;
}
.tray .clock {
    width: auto;
    margin: 0 11px 0 21px;
    font-size: 17px;
    line-height: 24px;
    text-align: right;
}
.badge {
    width: 24px;
    height: 24px;
    border-radius: 50%;
    background-color: #4cc2ff;
    color: #132b30;
    font-size: 15px;
    line-height: 24px;
    text-align: center;
}
.serif-w {
    fill: #fff;
    font-family: "Liberation Serif", serif;
    font-size: 30px;
    font-weight: 700;
}
```
